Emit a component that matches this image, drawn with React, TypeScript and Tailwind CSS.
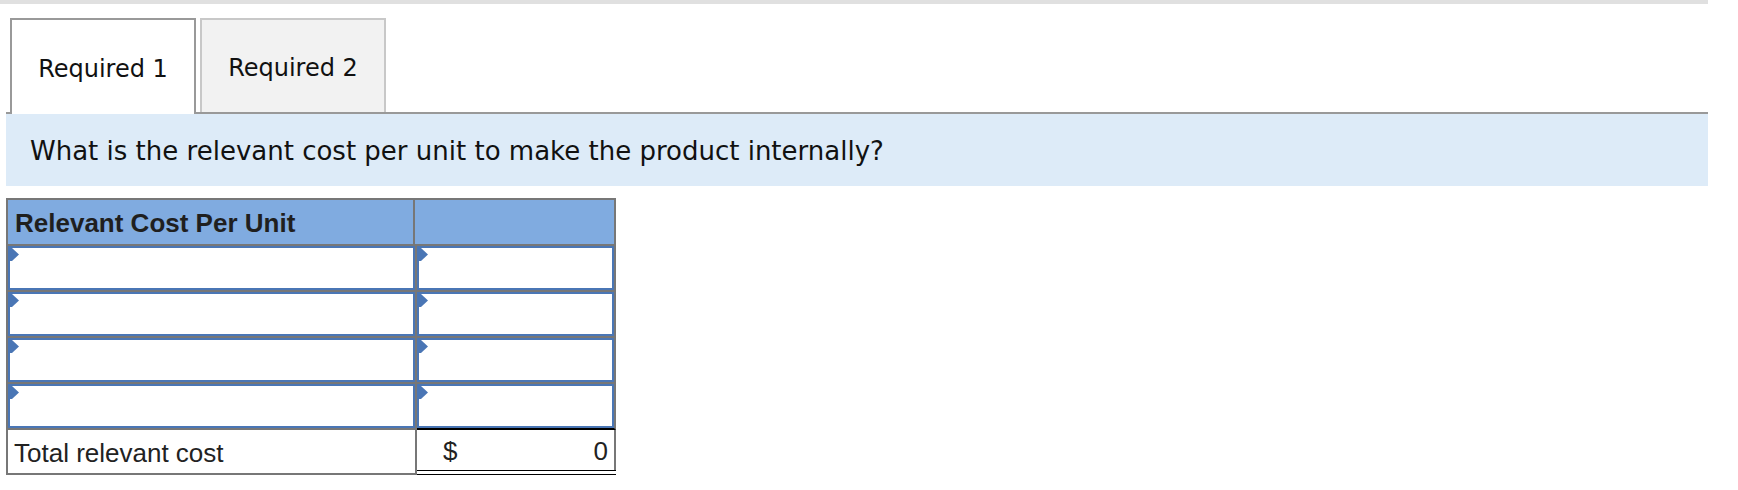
const tabFont = { fontFamily: '"DejaVu Sans", Verdana, sans-serif' };

function Flag() {
  return (
    <svg
      className="absolute -left-[1px] top-0 h-[13px] w-[10px]"
      viewBox="0 0 10 13"
    >
      <polygon points="0,0 3,0 10,6.5 3,13 0,13" fill="#4a76b5" />
    </svg>
  );
}

function InputCell({ width, last, right }: { width: string; last?: boolean; right?: boolean }) {
  return (
    <div
      className={`${width} h-[46px] border-r-2 border-b-2 ${
        last && right ? "border-r-[#777] border-b-black" : "border-[#777]"
      }`}
    >
      <div className="relative h-full w-full border-2 border-[#4a76b5] bg-white">
        <Flag />
      </div>
    </div>
  );
}

export default function App() {
  const rows = [0, 1, 2, 3];

  return (
    <div className="w-[1708px] bg-white pb-[15px]">
      <div className="h-[4px] bg-[#e0e0e0]" />

      <div className="ml-[6px] mt-[14px] flex items-end border-b-2 border-[#999] pl-[4px]" style={tabFont}>
        <div className="relative -mb-[2px] flex h-[96px] w-[186px] items-center justify-center border-2 border-b-0 border-[#999] bg-white pt-[4px] text-[24px] text-[#111]">
          Required 1
        </div>
        <div className="ml-[4px] flex h-[94px] w-[186px] items-center justify-center border-2 border-b-0 border-[#c8c8c8] bg-[#f2f2f2] pt-[4px] text-[24px] text-[#111]">
          Required 2
        </div>
      </div>

      <div
        className="ml-[6px] flex h-[72px] items-center bg-[#ddebf8] pl-[24px] pt-[2px] text-[26px] text-[#111]"
        style={tabFont}
      >
        What is the relevant cost per unit to make the product internally?
      </div>

      <div
        className="ml-[6px] mt-[12px] w-[610px]"
        style={{ fontFamily: '"Liberation Sans", Arial, sans-serif' }}
      >
        <div className="flex h-[48px] border-2 border-[#777] bg-[#80abe0]">
          <div className="flex w-[407px] items-center border-r-2 border-[#777] pl-[7px] pt-[3px] text-[26px] font-bold text-[#1f1f1f]">
            Relevant Cost Per Unit
          </div>
          <div className="flex-1" />
        </div>

        {rows.map((r) => (
          <div key={r} className="flex border-l-2 border-[#777]">
            <InputCell width="w-[409px]" last={r === 3} />
            <InputCell width="w-[199px]" last={r === 3} right />
          </div>
        ))}

        <div className="flex border-l-2 border-[#777] text-[26px] text-[#222]">
          <div className="flex h-[45px] w-[409px] items-center border-r-2 border-b-2 border-[#777] pl-[6px] pt-[3px]">
            Total relevant cost
          </div>
          <div className="flex w-[199px] flex-col">
            <div className="flex h-[40px] items-center justify-between border-r-2 border-[#777] pl-[26px] pr-[6px] pt-[3px]">
              <span>$</span>
              <span>0</span>
            </div>
            <div className="h-[5px] border-y-[1.5px] border-black" />
          </div>
        </div>
      </div>
    </div>
  );
}
